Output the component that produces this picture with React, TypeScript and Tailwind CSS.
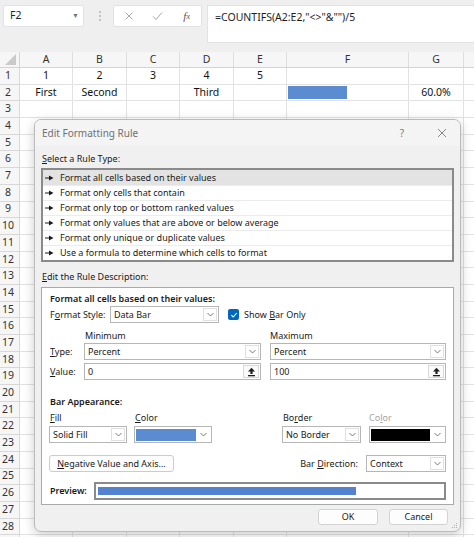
import React from "react";

const COLS = [
  { id: "A", w: "w-[53px]" },
  { id: "B", w: "w-[54px]" },
  { id: "C", w: "w-[53px]" },
  { id: "D", w: "w-[54px]" },
  { id: "E", w: "w-[53px]" },
  { id: "F", w: "w-[122px]" },
  { id: "G", w: "w-[55px]" },
  { id: "", w: "w-[40px]" },
];

const ROW_DATA: Record<number, string[]> = {
  1: ["1", "2", "3", "4", "5", "", "", ""],
  2: ["First", "Second", "", "Third", "", "BAR", "60.0%", ""],
};

const RULES = [
  "Format all cells based on their values",
  "Format only cells that contain",
  "Format only top or bottom ranked values",
  "Format only values that are above or below average",
  "Format only unique or duplicate values",
  "Use a formula to determine which cells to format",
];

const Chevron = () => (
  <svg width="9" height="9" viewBox="0 0 9 9">
    <polyline points="1.5,3 4.5,6 7.5,3" fill="none" stroke="#6a6a6a" strokeWidth="0.9" />
  </svg>
);

const RuleArrow = () => (
  <svg width="9" height="6" viewBox="0 0 9 6">
    <line x1="0" y1="3" x2="5" y2="3" stroke="#1a1a1a" strokeWidth="1.1" />
    <polygon points="4,0.6 8.5,3 4,5.4" fill="#1a1a1a" />
  </svg>
);

const CollapseIcon = () => (
  <svg width="9" height="10" viewBox="0 0 9 10">
    <polygon points="4.5,0.8 8,4.6 5.6,4.6 5.6,7 3.4,7 3.4,4.6 1,4.6" fill="#1f1f1f" />
    <rect x="1" y="8" width="7" height="1.3" fill="#1f1f1f" />
  </svg>
);

function Combo({ value, width }: { value: string; width: string }) {
  return (
    <div className={`${width} h-[17px] flex bg-white border border-[#b6b6b6]`}>
      <span className="flex-1 pl-[3px] leading-[15px] truncate">{value}</span>
      <span className="w-[14px] m-[1px] border border-[#e0e0e0] flex items-center justify-center">
        <Chevron />
      </span>
    </div>
  );
}

function ColorCombo({ color, width, swatch }: { color: string; width: string; swatch: string }) {
  return (
    <div className={`${width} h-[17px] flex items-center bg-white border border-[#b6b6b6]`}>
      <span className={`${swatch} ${color} h-[12px] ml-[1px]`} />
      <span className="flex-1 flex items-center justify-center">
        <Chevron />
      </span>
    </div>
  );
}

function ValueBox({ value, width }: { value: string; width: string }) {
  return (
    <div className={`${width} h-[17px] flex bg-white border border-[#b6b6b6]`}>
      <span className="flex-1 pl-[3px] leading-[15px]">{value}</span>
      <span className="w-[16px] m-[1px] border border-[#d8d8d8] bg-[#fafafa] flex items-center justify-center">
        <CollapseIcon />
      </span>
    </div>
  );
}

function FormulaBar() {
  return (
    <div className="h-[52px] shrink-0 bg-[#efefef] flex items-start pt-[5px] pl-[3px]">
      <div className="w-[81px] h-[22px] bg-white border border-[#e2e2e2] rounded-[2px] flex items-center justify-between pl-[6px] pr-[4px]">
        <span className="text-[10.5px] text-[#222]">F2</span>
        <span className="text-[7px] text-[#777]">▼</span>
      </div>
      <div className="w-[29px] h-[22px] flex flex-col items-center justify-center gap-[2px] pl-[3px]">
        <span className="w-[2px] h-[2px] bg-[#c2c2c2]" />
        <span className="w-[2px] h-[2px] bg-[#c2c2c2]" />
        <span className="w-[2px] h-[2px] bg-[#c2c2c2]" />
      </div>
      <div className="w-[89px] h-[22px] bg-white border border-[#e2e2e2] rounded-[2px] flex items-center">
        <span className="w-[30px] flex justify-center">
          <svg width="10" height="10" viewBox="0 0 10 10">
            <path d="M1.5 1.5 L8.5 8.5 M8.5 1.5 L1.5 8.5" stroke="#a8a8a8" strokeWidth="1" />
          </svg>
        </span>
        <span className="w-[29px] flex justify-center">
          <svg width="11" height="10" viewBox="0 0 11 10">
            <polyline points="1,5.5 4,8.5 10,1.5" fill="none" stroke="#a8a8a8" strokeWidth="1" />
          </svg>
        </span>
        <span className="w-[29px] flex justify-center font-['Liberation_Serif',serif] italic text-[11px] text-[#555]">
          f<span className="text-[8px] mt-[3px]">x</span>
        </span>
      </div>
      <div className="flex-1 ml-[5px] h-[38px] bg-white border-y border-l border-[#e2e2e2] pl-[7px] pt-[4px] text-[10.5px] text-[#1e1e1e]">
        =COUNTIFS(A2:E2,"&lt;&gt;"&amp;"")/5
      </div>
    </div>
  );
}

function Sheet() {
  const rows = Array.from({ length: 29 }, (_, i) => i + 1);
  return (
    <div className="flex flex-col">
      <div className="flex h-[16px] shrink-0 bg-[#f6f6f6] border-b border-[#d4d4d4]">
        <div className="w-[20px] shrink-0 border-r border-[#d4d4d4] flex items-end justify-end pr-[3px] pb-[2px]">
          <svg width="11" height="11" viewBox="0 0 11 11">
            <polygon points="11,0 11,11 0,11" fill="#cacaca" />
          </svg>
        </div>
        {COLS.map((c, ci) => (
          <div
            key={ci}
            className={`${c.w} shrink-0 border-r border-[#dedede] flex items-center justify-center text-[10.5px] text-[#333]`}
          >
            {c.id}
          </div>
        ))}
      </div>
      {rows.map((r) => (
        <div key={r} className="flex h-[16.7px] shrink-0">
          <div className="w-[20px] shrink-0 bg-[#f6f6f6] border-r border-b border-[#d8d8d8] flex items-center justify-center pr-[3px] text-[10.5px] text-[#333]">
            {r < 29 ? r : ""}
          </div>
          {COLS.map((c, ci) => {
            const v = ROW_DATA[r]?.[ci] ?? "";
            return (
              <div
                key={ci}
                className={`${c.w} shrink-0 bg-white border-r border-b border-[#e2e2e2] flex items-center justify-center text-[10.5px] text-[#111]`}
              >
                {v === "BAR" ? (
                  <div className="w-full h-full pl-[1px] py-[1px] flex">
                    <span className="w-[59px] h-full bg-[#5b8bd0]" />
                  </div>
                ) : (
                  v
                )}
              </div>
            );
          })}
        </div>
      ))}
    </div>
  );
}

function Dialog() {
  return (
    <div className="absolute left-[34px] top-[119px] w-[427px] h-[413px] rounded-[7px] border border-[#bababa] bg-[#f0f0f0] shadow-[0_3px_12px_rgba(0,0,0,0.2)] overflow-hidden text-[9px] text-[#1a1a1a]">
      <div className="h-[26px] bg-[#f4f4f4] flex items-center pl-[7px]">
        <span className="text-[10px] text-[#707070]">Edit Formatting Rule</span>
        <span className="ml-auto text-[10px] text-[#7a7a7a] mr-[33px]">?</span>
        <span className="mr-[13px] flex">
          <svg width="10" height="10" viewBox="0 0 10 10">
            <path d="M1 1 L9 9 M9 1 L1 9" stroke="#7a7a7a" strokeWidth="0.9" />
          </svg>
        </span>
      </div>

      <div className="px-[6px] flex flex-col">
        <div className="mt-[5px] h-[15px] leading-[15px] pl-[1px]">
          <u className="underline-offset-1">S</u>elect a Rule Type:
        </div>
        <div className="mt-[2px] h-[94px] bg-white border-2 border-[#8a8a8a] flex flex-col overflow-hidden">
          {RULES.map((rule, i) => (
            <div
              key={rule}
              className={`h-[15px] shrink-0 flex items-center pl-[2px] gap-[6px] ${
                i === 0 ? "bg-[#e3e3e3]" : "border-t border-[#ececec]"
              }`}
            >
              <RuleArrow />
              <span>{rule}</span>
            </div>
          ))}
        </div>

        <div className="mt-[8px] h-[14px] leading-[14px] pl-[1px]">
          <u className="underline-offset-1">E</u>dit the Rule Description:
        </div>
        <div className="mt-[3px] h-[218px] bg-white border border-[#a9a9a9] pl-[7px] flex flex-col">
          <div className="mt-[4px] h-[14px] leading-[14px] pl-[1px] font-semibold">
            Format all cells based on their values:
          </div>

          <div className="h-[17px] flex items-center">
            <span className="w-[61px] pl-[1px]">
              F<u className="underline-offset-1">o</u>rmat Style:
            </span>
            <Combo value="Data Bar" width="w-[109px]" />
            <span className="ml-[9px] w-[11px] h-[11px] rounded-[2px] bg-[#0067c0] flex items-center justify-center">
              <svg width="8" height="8" viewBox="0 0 8 8">
                <polyline points="1.3,4.2 3.2,6 6.8,2" fill="none" stroke="#fff" strokeWidth="1.1" />
              </svg>
            </span>
            <span className="ml-[5px]">
              Show <u className="underline-offset-1">B</u>ar Only
            </span>
          </div>

          <div className="mt-[6px] h-[14px] leading-[14px] flex">
            <span className="ml-[36px] w-[185px]">Minimum</span>
            <span>Maximum</span>
          </div>

          <div className="h-[17px] flex items-center">
            <span className="w-[35px] pl-[1px]">
              <u className="underline-offset-1">T</u>ype:
            </span>
            <Combo value="Percent" width="w-[177px]" />
            <span className="ml-[9px]">
              <Combo value="Percent" width="w-[176px]" />
            </span>
          </div>

          <div className="mt-[3px] h-[17px] flex items-center">
            <span className="w-[35px] pl-[1px]">
              <u className="underline-offset-1">V</u>alue:
            </span>
            <ValueBox value="0" width="w-[177px]" />
            <span className="ml-[9px]">
              <ValueBox value="100" width="w-[176px]" />
            </span>
          </div>

          <div className="mt-[15px] h-[14px] leading-[14px] pl-[1px] font-semibold">Bar Appearance:</div>

          <div className="mt-[2px] h-[14px] leading-[14px] flex">
            <span className="w-[85px] pl-[1px]">
              <u className="underline-offset-1">F</u>ill
            </span>
            <span className="w-[148px] pl-[1px]">
              <u className="underline-offset-1">C</u>olor
            </span>
            <span className="w-[87px] pl-[1px]">
              Bo<u className="underline-offset-1">r</u>der
            </span>
            <span className="text-[#a3a3a3]">
              Co<u className="underline-offset-1">l</u>or
            </span>
          </div>

          <div className="mt-[1px] h-[17px] flex">
            <Combo value="Solid Fill" width="w-[78px]" />
            <span className="ml-[7px]">
              <ColorCombo color="bg-[#5b8bd0]" width="w-[78px]" swatch="w-[60px]" />
            </span>
            <span className="ml-[70px]">
              <Combo value="No Border" width="w-[79px]" />
            </span>
            <span className="ml-[8px]">
              <ColorCombo color="bg-black" width="w-[77px]" swatch="w-[59px]" />
            </span>
          </div>

          <div className="mt-[12px] h-[17px] flex items-center">
            <button className="w-[125px] h-[17px] bg-[#fdfdfd] border border-[#cccccc] rounded-[3px] text-center leading-[15px]">
              <u className="underline-offset-1">N</u>egative Value and Axis...
            </button>
            <span className="w-[192px] text-right pr-[8px]">
              Bar <u className="underline-offset-1">D</u>irection:
            </span>
            <Combo value="Context" width="w-[80px]" />
          </div>

          <div className="mt-[10px] h-[18px] flex items-center">
            <span className="w-[45px] pl-[1px] font-semibold">Preview:</span>
            <div className="w-[352px] h-[18px] border-2 border-[#8a8a8a] bg-white pl-[2px] flex items-center">
              <span className="w-[258px] h-[8px] bg-[#5383cf]" />
            </div>
          </div>
        </div>

        <div className="mt-[4px] flex justify-end gap-[11px] pr-[6px]">
          <button className="w-[60px] h-[16px] bg-[#fdfdfd] border border-[#d2d2d2] rounded-[3px] leading-[14px]">OK</button>
          <button className="w-[59px] h-[16px] bg-[#fdfdfd] border border-[#d2d2d2] rounded-[3px] leading-[14px]">Cancel</button>
        </div>
      </div>

      <svg className="absolute right-[2px] bottom-[2px]" width="7" height="7" viewBox="0 0 7 7">
        <rect x="5" y="1" width="1" height="1" fill="#b0b0b0" />
        <rect x="3" y="3" width="1" height="1" fill="#b0b0b0" />
        <rect x="5" y="3" width="1" height="1" fill="#b0b0b0" />
        <rect x="1" y="5" width="1" height="1" fill="#b0b0b0" />
        <rect x="3" y="5" width="1" height="1" fill="#b0b0b0" />
        <rect x="5" y="5" width="1" height="1" fill="#b0b0b0" />
      </svg>
    </div>
  );
}

export default function App() {
  return (
    <div className="relative w-[474px] h-[537px] overflow-hidden bg-[#efefef] font-['Noto_Sans',sans-serif] flex flex-col">
      <FormulaBar />
      <Sheet />
      <Dialog />
    </div>
  );
}
